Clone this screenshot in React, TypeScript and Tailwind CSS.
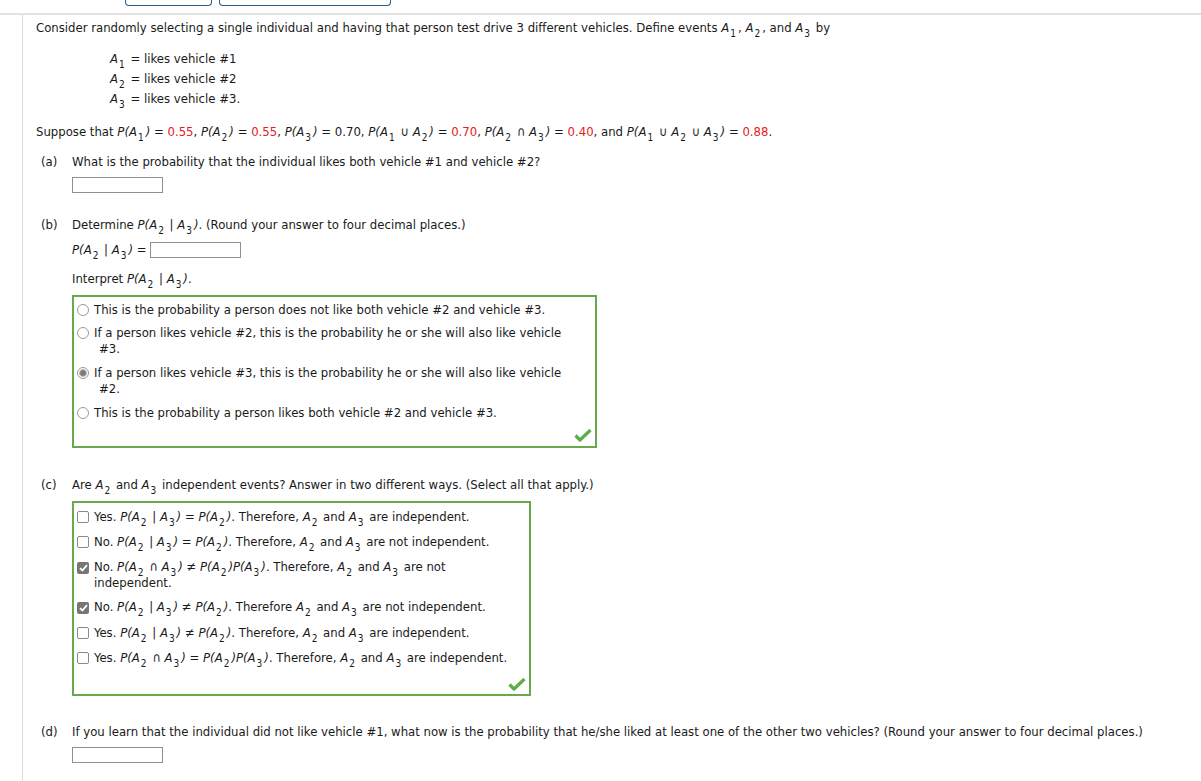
import React from 'react'

const font = { fontFamily: '"DejaVu Sans Condensed", "DejaVu Sans", sans-serif' }

function Sub({ n }: { n: string }) {
  return <span className="relative top-[5px] ml-[1px] mr-[2px] text-[10px] leading-[0] not-italic">{n}</span>
}

function A({ n }: { n: string }) {
  return (
    <span className="italic">
      A<Sub n={n} />
    </span>
  )
}

function Red({ children }: { children: React.ReactNode }) {
  return <span className="text-[#e3201b]">{children}</span>
}

function Box({ className = '' }: { className?: string }) {
  return <span className={`inline-block w-[91px] h-[16px] border border-[#8f8f8f] bg-white align-middle ${className}`} />
}

function Radio({ checked }: { checked?: boolean }) {
  return (
    <span className="mt-[2px] w-[12px] h-[12px] shrink-0 rounded-full border border-[#9a9a9a] bg-white flex items-center justify-center">
      {checked && <span className="w-[8px] h-[8px] rounded-full bg-[#7a7a7a] border border-[#bdbdbd]" />}
    </span>
  )
}

function Check({ checked }: { checked?: boolean }) {
  return checked ? (
    <span className="mt-[3px] w-[12px] h-[12px] shrink-0 rounded-[2px] bg-[#767676] flex items-center justify-center">
      <svg width="9" height="8" viewBox="0 0 9 8">
        <path d="M1 4.2 L3.4 6.5 L8 1.2" stroke="white" strokeWidth="1.8" fill="none" />
      </svg>
    </span>
  ) : (
    <span className="mt-[2px] w-[12px] h-[12px] shrink-0 rounded-[2px] border border-[#8a8a8a] bg-white" />
  )
}

function GreenTick() {
  return (
    <svg width="18" height="14" viewBox="0 0 18 14">
      <path d="M1.5 7.5 L6 12 L16.5 2" stroke="#5cae48" strokeWidth="3.2" fill="none" strokeLinejoin="round" />
    </svg>
  )
}

function Option({ control, children, className = '' }: { control: React.ReactNode; children: React.ReactNode; className?: string }) {
  return (
    <div className={`flex gap-[5px] leading-[16px] ${className}`}>
      {control}
      <div className="whitespace-nowrap">{children}</div>
    </div>
  )
}

export default function App() {
  return (
    <div style={font} className="w-[1201px] h-[781px] bg-white text-[13px] text-[#1a1a1a] overflow-hidden">
      {/* top toolbar */}
      <div className="h-[15px] border-b-2 border-[#e2e2e2] flex">
        <span className="ml-[125px] w-[87px] h-[6px] border-x border-b border-[#2a5a85] rounded-b-[4px]" />
        <span className="ml-[7px] w-[172px] h-[6px] border-x border-b border-[#2a5a85] rounded-b-[4px]" />
      </div>

      <div className="ml-[22px] border-l border-[#dcdcdc] pl-[13px] pt-[5px] h-full">
        <div className="leading-[16px] whitespace-nowrap">
          Consider randomly selecting a single individual and having that person test drive 3 different vehicles. Define events{' '}
          <A n="1" />, <A n="2" />, and <A n="3" /> by
        </div>

        <div className="mt-[13px] pl-[74px] leading-[20px]">
          <div><A n="1" /> = likes vehicle #1</div>
          <div><A n="2" /> = likes vehicle #2</div>
          <div><A n="3" /> = likes vehicle #3.</div>
        </div>

        <div className="mt-[15px] leading-[16px] whitespace-nowrap">
          Suppose that <i>P(</i><A n="1" /><i>)</i> = <Red>0.55</Red>, <i>P(</i><A n="2" /><i>)</i> = <Red>0.55</Red>,{' '}
          <i>P(</i><A n="3" /><i>)</i> = 0.70, <i>P(</i><A n="1" /> ∪ <A n="2" /><i>)</i> = <Red>0.70</Red>,{' '}
          <i>P(</i><A n="2" /> ∩ <A n="3" /><i>)</i> = <Red>0.40</Red>, and <i>P(</i><A n="1" /> ∪ <A n="2" /> ∪ <A n="3" />
          <i>)</i> = <Red>0.88</Red>.
        </div>

        {/* (a) */}
        <div className="mt-[14px] flex leading-[16px]">
          <span className="ml-[5px] w-[31px]">(a)</span>
          <div>
            <div>What is the probability that the individual likes both vehicle #1 and vehicle #2?</div>
            <div className="mt-[7px] h-[16px] flex"><Box /></div>
          </div>
        </div>

        {/* (b) */}
        <div className="mt-[24px] flex leading-[16px]">
          <span className="ml-[5px] w-[31px]">(b)</span>
          <div>
            <div>
              Determine <i>P(</i><A n="2" /> | <A n="3" /><i>)</i>. (Round your answer to four decimal places.)
            </div>
            <div className="mt-[9px] flex items-center h-[16px]">
              <span><i>P(</i><A n="2" /> | <A n="3" /><i>)</i> =&nbsp;</span>
              <Box />
            </div>
            <div className="mt-[13px]">
              Interpret <i>P(</i><A n="2" /> | <A n="3" /><i>)</i>.
            </div>
            <div className="mt-[8px] w-[525px] border-2 border-[#6aa84f] pl-[3px] pt-[5px] pb-[4px] flex flex-col">
              <Option control={<Radio />}>This is the probability a person does not like both vehicle #2 and vehicle #3.</Option>
              <Option control={<Radio />} className="mt-[7px]">
                If a person likes vehicle #2, this is the probability he or she will also like vehicle
                <div className="pl-[5px]">#3.</div>
              </Option>
              <Option control={<Radio checked />} className="mt-[8px]">
                If a person likes vehicle #3, this is the probability he or she will also like vehicle
                <div className="pl-[5px]">#2.</div>
              </Option>
              <Option control={<Radio />} className="mt-[8px]">This is the probability a person likes both vehicle #2 and vehicle #3.</Option>
              <div className="mt-[7px] flex justify-end pr-[3px]"><GreenTick /></div>
            </div>
          </div>
        </div>

        {/* (c) */}
        <div className="mt-[29px] flex leading-[16px]">
          <span className="ml-[5px] w-[31px]">(c)</span>
          <div>
            <div>
              Are <A n="2" /> and <A n="3" /> independent events? Answer in two different ways. (Select all that apply.)
            </div>
            <div className="mt-[8px] w-[459px] border-2 border-[#6aa84f] pl-[3px] pt-[6px] pb-[3px] flex flex-col">
              <Option control={<Check />}>
                Yes. <i>P(</i><A n="2" /> | <A n="3" /><i>)</i> = <i>P(</i><A n="2" /><i>)</i>. Therefore, <A n="2" /> and <A n="3" /> are independent.
              </Option>
              <Option control={<Check />} className="mt-[9px]">
                No. <i>P(</i><A n="2" /> | <A n="3" /><i>)</i> = <i>P(</i><A n="2" /><i>)</i>. Therefore, <A n="2" /> and <A n="3" /> are not independent.
              </Option>
              <Option control={<Check checked />} className="mt-[9px]">
                No. <i>P(</i><A n="2" /> ∩ <A n="3" /><i>)</i> ≠ <i>P(</i><A n="2" /><i>)P(</i><A n="3" /><i>)</i>. Therefore, <A n="2" /> and <A n="3" /> are not
                <div>independent.</div>
              </Option>
              <Option control={<Check checked />} className="mt-[8px]">
                No. <i>P(</i><A n="2" /> | <A n="3" /><i>)</i> ≠ <i>P(</i><A n="2" /><i>)</i>. Therefore <A n="2" /> and <A n="3" /> are not independent.
              </Option>
              <Option control={<Check />} className="mt-[10px]">
                Yes. <i>P(</i><A n="2" /> | <A n="3" /><i>)</i> ≠ <i>P(</i><A n="2" /><i>)</i>. Therefore, <A n="2" /> and <A n="3" /> are independent.
              </Option>
              <Option control={<Check />} className="mt-[9px]">
                Yes. <i>P(</i><A n="2" /> ∩ <A n="3" /><i>)</i> = <i>P(</i><A n="2" /><i>)P(</i><A n="3" /><i>)</i>. Therefore, <A n="2" /> and <A n="3" /> are independent.
              </Option>
              <div className="mt-[11px] flex justify-end pr-[3px]"><GreenTick /></div>
            </div>
          </div>
        </div>

        {/* (d) */}
        <div className="mt-[28px] flex leading-[16px]">
          <span className="ml-[5px] w-[31px]">(d)</span>
          <div>
            <div className="whitespace-nowrap">
              If you learn that the individual did not like vehicle #1, what now is the probability that he/she liked at least one of the other two vehicles? (Round your answer to four decimal places.)
            </div>
            <div className="mt-[7px] h-[16px] flex"><Box /></div>
          </div>
        </div>
      </div>
    </div>
  )
}
